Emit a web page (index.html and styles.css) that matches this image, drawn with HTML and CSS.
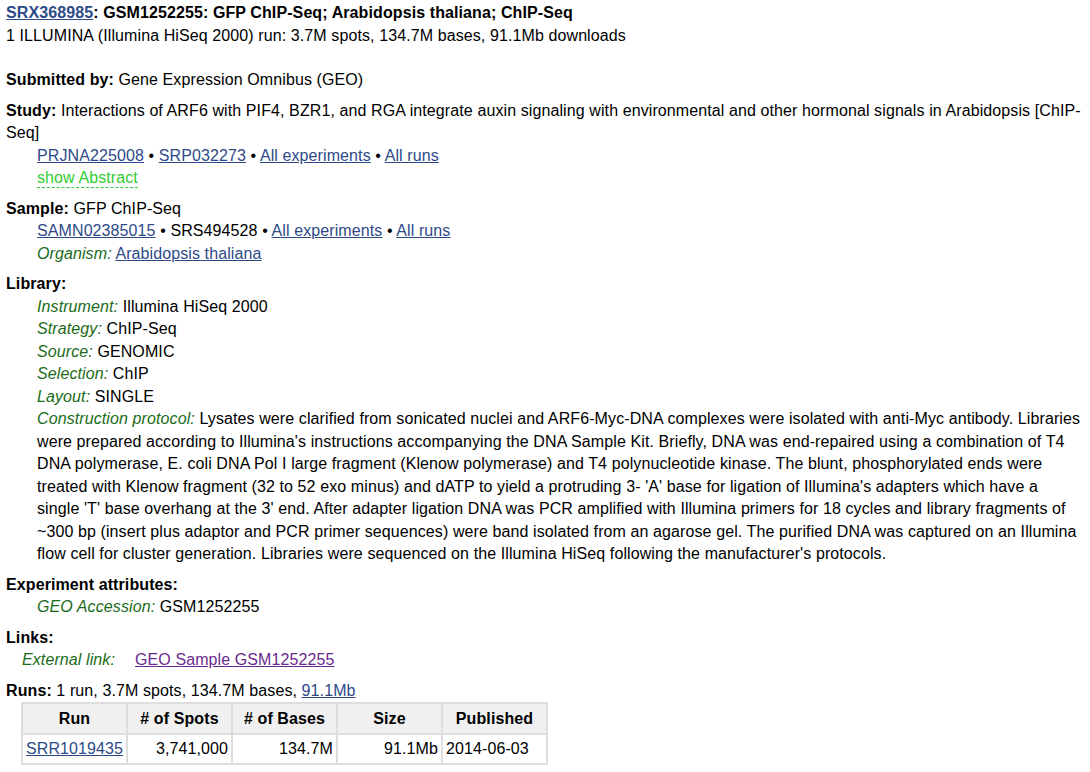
FILE: index.html
```
<!DOCTYPE html>
<html>
<head>
<meta charset="utf-8">
<link rel="stylesheet" href="styles.css">
</head>
<body>
<div class="page">
  <div class="head">
    <div class="title"><a href="#" class="lnk">SRX368985</a>: GSM1252255: GFP ChIP-Seq; Arabidopsis thaliana; ChIP-Seq</div>
    <div>1 ILLUMINA (Illumina HiSeq 2000) run: 3.7M spots, 134.7M bases, 91.1Mb downloads</div>
  </div>

  <div class="sec"><b>Submitted by:</b> Gene Expression Omnibus (GEO)</div>

  <div class="sec">
    <div><b>Study:</b> Interactions of ARF6 with PIF4, BZR1, and RGA integrate auxin signaling with environmental and other hormonal signals in Arabidopsis [ChIP-Seq]</div>
    <div class="ind"><a href="#" class="lnk">PRJNA225008</a> • <a href="#" class="lnk">SRP032273</a> • <a href="#" class="lnk">All experiments</a> • <a href="#" class="lnk">All runs</a></div>
    <div class="ind"><span class="abs">show Abstract</span></div>
  </div>

  <div class="sec">
    <div><b>Sample:</b> GFP ChIP-Seq</div>
    <div class="ind"><a href="#" class="lnk">SAMN02385015</a> • SRS494528 • <a href="#" class="lnk">All experiments</a> • <a href="#" class="lnk">All runs</a></div>
    <div class="ind"><span class="lab">Organism:</span> <a href="#" class="lnk">Arabidopsis thaliana</a></div>
  </div>

  <div class="sec">
    <div><b>Library:</b></div>
    <div class="ind">
      <div><span class="lab">Instrument:</span> Illumina HiSeq 2000</div>
      <div><span class="lab">Strategy:</span> ChIP-Seq</div>
      <div><span class="lab">Source:</span> GENOMIC</div>
      <div><span class="lab">Selection:</span> ChIP</div>
      <div><span class="lab">Layout:</span> SINGLE</div>
    </div>
    <div class="proto"><span class="lab">Construction protocol:</span> Lysates were clarified from sonicated nuclei and ARF6-Myc-DNA complexes were isolated with anti-Myc antibody. Libraries were prepared according to Illumina's instructions accompanying the DNA Sample Kit. Briefly, DNA was end-repaired using a combination of T4 DNA polymerase, E. coli DNA Pol I large fragment (Klenow polymerase) and T4 polynucleotide kinase. The blunt, phosphorylated ends were treated with Klenow fragment (32 to 52 exo minus) and dATP to yield a protruding 3- 'A' base for ligation of Illumina's adapters which have a single 'T' base overhang at the 3' end. After adapter ligation DNA was PCR amplified with Illumina primers for 18 cycles and library fragments of ~300 bp (insert plus adaptor and PCR primer sequences) were band isolated from an agarose gel. The purified DNA was captured on an Illumina flow cell for cluster generation. Libraries were sequenced on the Illumina HiSeq following the manufacturer's protocols.</div>
  </div>

  <div class="sec">
    <div><b>Experiment attributes:</b></div>
    <div class="ind"><span class="lab">GEO Accession:</span> GSM1252255</div>
  </div>

  <div class="sec">
    <div><b>Links:</b></div>
    <div class="ext"><span class="lab extlab">External link:</span><a href="#" class="vis">GEO Sample GSM1252255</a></div>
  </div>

  <div class="sec">
    <div><b>Runs:</b> 1 run, 3.7M spots, 134.7M bases, <a href="#" class="lnk">91.1Mb</a></div>
    <table class="runs">
      <thead>
        <tr><th>Run</th><th># of Spots</th><th># of Bases</th><th>Size</th><th>Published</th></tr>
      </thead>
      <tbody>
        <tr><td><a href="#" class="lnk">SRR1019435</a></td><td class="num">3,741,000</td><td class="num">134.7M</td><td class="num">91.1Mb</td><td>2014-06-03</td></tr>
      </tbody>
    </table>
  </div>
</div>
</body>
</html>
```
FILE: styles.css
```
html, body {
  margin: 0;
  padding: 0;
  background: #fff;
}
body {
  font-family: "Liberation Sans", Arial, sans-serif;
  font-size: 16px;
  letter-spacing: 0.1px;
  line-height: 22.5px;
  color: #000;
}
.page {
  padding: 2px 6px 0 6px;
}
.title {
  font-weight: bold;
}
.head {
  margin-bottom: 22px;
}
.sec {
  margin-bottom: 8px;
}
.lnk {
  color: #2d4a88;
  text-decoration: underline;
}
.vis {
  color: #6a2a8e;
  text-decoration: underline;
}
.ind {
  padding-left: 31px;
}
.proto {
  padding-left: 31px;
}
.lab {
  font-style: italic;
  color: #1a6b1a;
}
.abs {
  color: #33cc33;
  border-bottom: 1px dashed #33cc33;
  line-height: 19px;
  display: inline-block;
}
.ext {
  padding-left: 16px;
  display: flex;
}
.extlab {
  width: 113px;
}
.runs {
  margin-left: 15px;
  border-collapse: collapse;
  table-layout: fixed;
  width: 527px;
}
.runs th, .runs td {
  border: 2px solid #dedede;
  padding: 3px 3px;
  line-height: 23px;
}
.runs th {
  background: #f0f0f0;
  font-weight: bold;
  text-align: center;
}
.runs td {
  text-align: left;
  padding-top: 2px;
  padding-bottom: 3px;
}
.runs td.num {
  text-align: right;
}
```
